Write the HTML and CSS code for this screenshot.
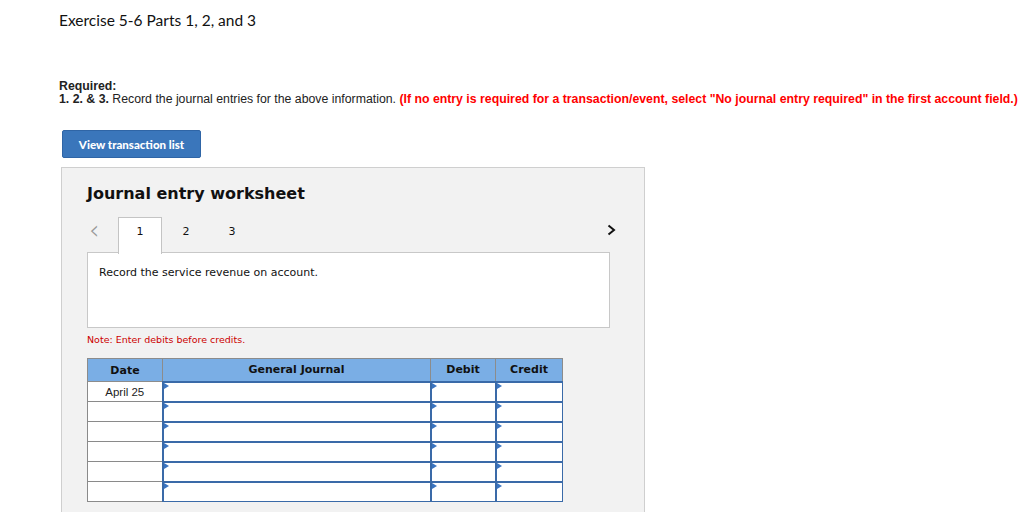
FILE: index.html
```html
<!DOCTYPE html>
<html>
<head>
<meta charset="utf-8">
<link rel="stylesheet" href="styles.css">
</head>
<body>
<div class="page">
  <h1 class="title">Exercise 5-6 Parts 1, 2, and 3</h1>
  <div class="required">
    <div class="req-label">Required:</div>
    <div class="req-text"><b>1. 2. &amp; 3.</b> Record the journal entries for the above information. <span class="warn">(If no entry is required for a transaction/event, select "No journal entry required" in the first account field.)</span></div>
  </div>
  <button class="btn">View transaction list</button>
  <div class="panel">
    <h2 class="panel-title">Journal entry worksheet</h2>
    <div class="tabs">
      <span class="arrow prev">&lsaquo;</span>
      <span class="tab active">1</span>
      <span class="tab">2</span>
      <span class="tab">3</span>
      <span class="spacer"></span>
      <span class="arrow next">
        <svg width="9" height="12" viewBox="0 0 9 12"><path d="M1.5 1.5 L7 6 L1.5 10.5" fill="none" stroke="#111" stroke-width="2"/></svg>
      </span>
    </div>
    <div class="desc">Record the service revenue on account.</div>
    <div class="note">Note: Enter debits before credits.</div>
    <table class="journal">
      <thead>
        <tr><th class="c-date">Date</th><th class="c-acct">General Journal</th><th class="c-debit">Debit</th><th class="c-credit">Credit</th></tr>
      </thead>
      <tbody>
        <tr><td class="date">April 25</td><td class="inp"><i></i></td><td class="inp"><i></i></td><td class="inp"><i></i></td></tr>
        <tr><td class="date"></td><td class="inp"><i></i></td><td class="inp"><i></i></td><td class="inp"><i></i></td></tr>
        <tr><td class="date"></td><td class="inp"><i></i></td><td class="inp"><i></i></td><td class="inp"><i></i></td></tr>
        <tr><td class="date"></td><td class="inp"><i></i></td><td class="inp"><i></i></td><td class="inp"><i></i></td></tr>
        <tr><td class="date"></td><td class="inp"><i></i></td><td class="inp"><i></i></td><td class="inp"><i></i></td></tr>
        <tr><td class="date"></td><td class="inp"><i></i></td><td class="inp"><i></i></td><td class="inp"><i></i></td></tr>
      </tbody>
    </table>
  </div>
</div>
</body>
</html>
```
FILE: styles.css
```css
* { box-sizing: border-box; }
html, body { margin: 0; padding: 0; background: #fff; }
body { overflow: hidden; }
.page { padding: 10px 0 0 59px; }
.title {
  margin: 0;
  font-family: Lato, "Open Sans", sans-serif;
  font-weight: 400;
  font-size: 15.5px;
  line-height: 20px;
  color: #111;
}
.required {
  margin-top: 49px;
  font-family: "Liberation Sans", Arial, sans-serif;
  font-size: 12.3px;
  line-height: 14px;
  color: #222;
}
.req-label { font-weight: bold; }
.req-text { margin-top: -1px; }
.warn { color: #f00; font-weight: bold; }
.btn {
  display: block;
  margin: 24px 0 0 3px;
  width: 139px;
  height: 28px;
  border: 1px solid #2f65a6;
  border-radius: 2px;
  background: #3a76bb;
  color: #fff;
  font-family: Lato, "Liberation Sans", sans-serif;
  font-weight: 900;
  font-size: 11.5px;
  padding: 0;
}
.panel {
  margin: 9px 0 0 2px;
  width: 584px;
  height: 360px;
  background: #f2f2f2;
  border: 1px solid #cfcfcf;
  padding: 16px 34px 0 25px;
  font-family: "DejaVu Sans", Verdana, sans-serif;
}
.panel-title {
  margin: 0;
  font-size: 16px;
  font-weight: bold;
  line-height: 20px;
  color: #111;
  letter-spacing: 0;
}
.tabs {
  display: flex;
  align-items: flex-start;
  height: 36px;
  margin-top: 13px;
  font-size: 11px;
  line-height: 14px;
  color: #111;
}
.arrow.prev {
  width: 31px;
  padding-left: 2px;
  margin-top: -2px;
  font-size: 26px;
  color: #999;
  line-height: 30px;
  font-family: "DejaVu Sans", sans-serif;
  font-weight: 200;
}
.tab {
  width: 44px;
  height: 36px;
  display: flex;
  justify-content: center;
  padding-top: 8px;
  margin-right: 2px;
}
.tab.active {
  background: #fff;
  border: 1px solid #c4c4c4;
  border-bottom: none;
  height: 37px;
  padding-top: 7px;
  position: relative;
  z-index: 1;
}
.spacer { flex: 1; }
.arrow.next { width: 10px; margin-right: -7px; margin-top: 7px; display: flex; }
.desc {
  width: 523px;
  height: 76px;
  margin-top: -1px;
  background: #fff;
  border: 1px solid #c8c8c8;
  padding: 13px 0 0 11px;
  font-size: 11px;
  line-height: 14px;
  color: #111;
}
.note {
  margin-top: 5px;
  font-size: 9.5px;
  line-height: 14px;
  color: #c00;
}
.journal {
  margin-top: 11px;
  border-collapse: collapse;
  font-size: 11px;
  table-layout: fixed;
}
.journal th {
  background: #7aaee5;
  border: 1px solid #8c8c8c;
  height: 23px;
  font-weight: bold;
  color: #111;
  padding: 0;
}
.c-date { width: 75px; }
.c-acct { width: 268px; }
.c-debit { width: 65px; }
.c-credit { width: 67px; }
.journal td { height: 20px; padding: 0; }
.journal td.date {
  border: 1px solid #8a8a8a;
  background: #fff;
  text-align: center;
  font-family: "Liberation Sans", Arial, sans-serif;
  font-size: 11.5px;
  color: #222;
}
.journal td.inp {
  position: relative;
  background: #fff;
  border-left: 2px solid #3a6aa8;
  border-top: 2px solid #3a6aa8;
  border-right: 1px solid #3a6aa8;
  border-bottom: 1px solid #3a6aa8;
}
.journal td.inp i {
  position: absolute;
  left: 0;
  top: 0;
  width: 0;
  height: 0;
  border-top: 3px solid transparent;
  border-bottom: 3px solid transparent;
  border-left: 5px solid #3a74c0;
}
```
